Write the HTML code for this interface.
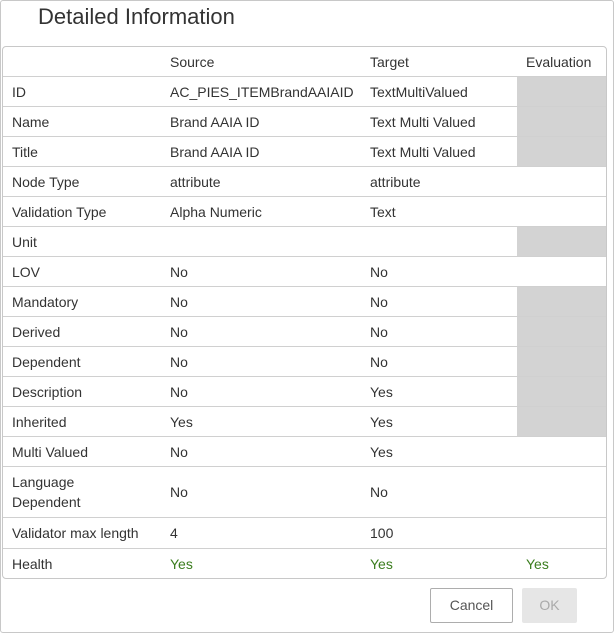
<!DOCTYPE html>
<html><head><style>
html,body{margin:0;padding:0;background:#fff}
body{width:614px;height:633px;position:relative;font-family:"Liberation Sans",sans-serif;font-size:14px;color:#333;overflow:hidden}
.frame{position:absolute;left:0;top:0;width:612px;height:631px;border:1px solid #c8c8c8;border-radius:3px}
h1{position:absolute;left:38px;top:4px;margin:0;font-weight:normal;font-size:22px;color:#333}
.tbl{position:absolute;left:2px;top:46px;width:603px;height:531px;border:1px solid #c8c8c8;border-radius:4px;overflow:hidden}
.row{position:absolute;left:0;width:603px;border-bottom:1px solid #d0d0d0}
.row span{position:absolute;top:50%;transform:translateY(-50%);line-height:20px}
.c1{left:9px}.c2{left:167px}.c3{left:367px}.c4{left:523px}
.g{position:absolute;left:514px;top:0;bottom:0;width:89px;background:#d3d3d3}
.gr{color:#3b7d1e}
.btn{position:absolute;top:588px;height:35px;box-sizing:border-box;text-align:center;line-height:35px;font-size:14px;border-radius:2px}
</style></head><body>
<div class="frame"></div>
<h1>Detailed Information</h1>
<div class="tbl">
<div class="row" style="top:0;height:29px"><span class="c2">Source</span><span class="c3">Target</span><span class="c4">Evaluation</span></div>
<div class="row" style="top:30px;height:29px"><div class="g"></div><span class="c1">ID</span><span class="c2">AC_PIES_ITEMBrandAAIAID</span><span class="c3">TextMultiValued</span></div>
<div class="row" style="top:60px;height:29px"><div class="g"></div><span class="c1">Name</span><span class="c2">Brand AAIA ID</span><span class="c3">Text Multi Valued</span></div>
<div class="row" style="top:90px;height:29px"><div class="g"></div><span class="c1">Title</span><span class="c2">Brand AAIA ID</span><span class="c3">Text Multi Valued</span></div>
<div class="row" style="top:120px;height:29px"><span class="c1">Node Type</span><span class="c2">attribute</span><span class="c3">attribute</span></div>
<div class="row" style="top:150px;height:29px"><span class="c1">Validation Type</span><span class="c2">Alpha Numeric</span><span class="c3">Text</span></div>
<div class="row" style="top:180px;height:29px"><div class="g"></div><span class="c1">Unit</span></div>
<div class="row" style="top:210px;height:29px"><span class="c1">LOV</span><span class="c2">No</span><span class="c3">No</span></div>
<div class="row" style="top:240px;height:29px"><div class="g"></div><span class="c1">Mandatory</span><span class="c2">No</span><span class="c3">No</span></div>
<div class="row" style="top:270px;height:29px"><div class="g"></div><span class="c1">Derived</span><span class="c2">No</span><span class="c3">No</span></div>
<div class="row" style="top:300px;height:29px"><div class="g"></div><span class="c1">Dependent</span><span class="c2">No</span><span class="c3">No</span></div>
<div class="row" style="top:330px;height:29px"><div class="g"></div><span class="c1">Description</span><span class="c2">No</span><span class="c3">Yes</span></div>
<div class="row" style="top:360px;height:29px"><div class="g"></div><span class="c1">Inherited</span><span class="c2">Yes</span><span class="c3">Yes</span></div>
<div class="row" style="top:390px;height:29px"><span class="c1">Multi Valued</span><span class="c2">No</span><span class="c3">Yes</span></div>
<div class="row" style="top:420px;height:50px"><span class="c1">Language<br>Dependent</span><span class="c2">No</span><span class="c3">No</span></div>
<div class="row" style="top:471px;height:30px"><span class="c1">Validator max length</span><span class="c2">4</span><span class="c3">100</span></div>
<div class="row" style="top:502px;height:29px;border-bottom:none"><span class="c1">Health</span><span class="c2 gr">Yes</span><span class="c3 gr">Yes</span><span class="c4 gr">Yes</span></div>
</div>
<div class="btn" style="left:430px;width:83px;border:1px solid #adadad;color:#555;background:#fff;line-height:33px">Cancel</div>
<div class="btn" style="left:522px;width:55px;background:#e6e6e6;color:#aaa">OK</div>
</body></html>
